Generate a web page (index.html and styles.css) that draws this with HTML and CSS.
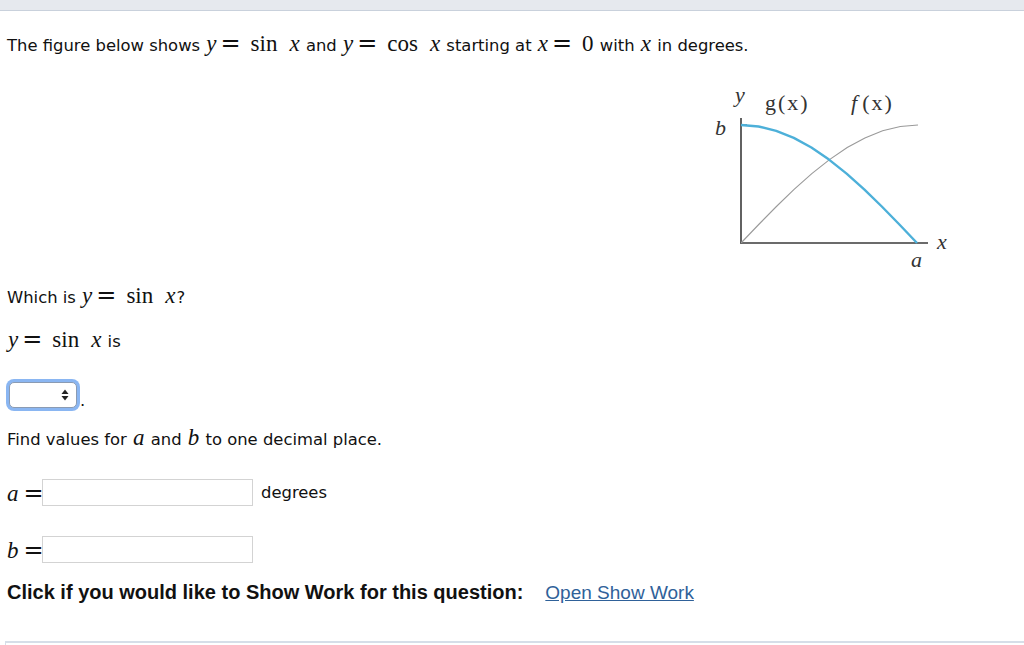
FILE: index.html
```html
<!DOCTYPE html>
<html>
<head>
<meta charset="utf-8">
<link rel="stylesheet" href="styles.css">
</head>
<body>
<div class="topbar"></div>
<div class="content">
  <p class="line intro">The figure below shows <span class="m"><i>y</i><span class="op">=</span><span class="fn">sin</span><i>x</i></span> and <span class="m"><i>y</i><span class="op">=</span><span class="fn">cos</span><i>x</i></span> starting at <span class="m"><i>x</i><span class="op">=</span>0</span> with <span class="m"><i>x</i></span> in degrees.</p>
  <div class="figure">
    <svg width="260" height="195" viewBox="0 0 260 195">
      <line x1="41" y1="38" x2="41" y2="163.5" stroke="#3a3a3a" stroke-width="1.6"/>
      <line x1="40.2" y1="163" x2="228" y2="163" stroke="#3a3a3a" stroke-width="1.6"/>
      <line x1="41" y1="45" x2="47" y2="45" stroke="#3a3a3a" stroke-width="1.2"/>
      <polyline fill="none" stroke="#9a9a9a" stroke-width="1.1" points="41,163 58.7,144.5 76.4,126.5 94.1,109.4 111.8,93.6 129.5,79.6 147.2,67.5 164.9,57.9 182.6,50.8 200.3,46.5 218,45"/>
      <polyline fill="none" stroke="#4db0d9" stroke-width="2.4" stroke-linejoin="round" points="41,45 58.6,46.5 76.2,50.8 93.8,57.9 111.4,67.5 129,79.6 146.6,93.6 164.2,109.4 181.8,126.5 199.4,144.5 217,163"/>
      <text x="35" y="22" class="fl it">y</text>
      <text x="65" y="30" class="fl sp">g(x)</text>
      <text x="151" y="30" class="fl sp"><tspan font-style="italic">f</tspan><tspan dx="3">(x)</tspan></text>
      <text x="15" y="55" class="fl it">b</text>
      <text x="237" y="169" class="fl it">x</text>
      <text x="211" y="187" class="fl it">a</text>
    </svg>
  </div>
  <p class="line which">Which is <span class="m"><i>y</i><span class="op">=</span><span class="fn">sin</span><i>x</i></span>?</p>
  <p class="line ysin"><span class="m"><i>y</i><span class="op">=</span><span class="fn">sin</span><i>x</i></span> is</p>
  <div class="selrow">
    <span class="select">
      <svg class="arrows" width="8" height="12" viewBox="0 0 8 12">
        <polygon points="4,0.5 7.5,5 0.5,5" fill="#222"/>
        <polygon points="0.5,7 7.5,7 4,11.5" fill="#222"/>
      </svg>
    </span><span class="dot">.</span>
  </div>
  <p class="line find">Find values for <span class="m"><i>a</i></span> and <span class="m"><i>b</i></span> to one decimal place.</p>
  <div class="inrow arow">
    <span class="m lbl"><i>a</i><span class="op eq">=</span></span><span class="input"></span><span class="unit">degrees</span>
  </div>
  <div class="inrow brow">
    <span class="m lbl"><i>b</i><span class="op eq">=</span></span><span class="input"></span>
  </div>
  <p class="click"><b>Click if you would like to Show Work for this question:</b><a href="#" class="link">Open Show Work</a></p>
  <div class="bottomline"></div>
</div>
</body>
</html>
```
FILE: styles.css
```css
html, body {
  margin: 0;
  padding: 0;
  background: #ffffff;
}
body {
  font-family: "DejaVu Sans", Verdana, sans-serif;
  font-size: 16.4px;
  color: #111;
}
.topbar {
  height: 10px;
  background: #e6e9ee;
  border-bottom: 1px solid #c9d1dc;
}
.content {
  padding-left: 7px;
}
.line {
  margin: 0;
  line-height: 24px;
  height: 24px;
  white-space: nowrap;
}
.m {
  font-family: "Liberation Serif", "Times New Roman", serif;
  font-size: 23px;
  line-height: 1;
  margin: 0 1px;
}
.m i {
  font-family: "Liberation Serif", "Times New Roman", "DejaVu Serif", serif;
  font-style: italic;
}
.op {
  font-family: "DejaVu Serif", serif;
  font-size: 24px;
  margin: 0 10px 0 4px;
}
.fn {
  margin-right: 12px;
}
.intro {
  margin-top: 20px;
}
.figure {
  display: flex;
  padding-left: 693px;
  margin-top: 25px;
  height: 195px;
}
.fl {
  font-family: "Liberation Serif", "Times New Roman", serif;
  font-size: 22px;
  fill: #333;
}
.sp {
  letter-spacing: 2px;
}
.it {
  font-style: italic;
}
.which {
  margin-top: 8px;
}
.ysin {
  margin-top: 20px;
}
.selrow {
  margin-top: 30px;
  height: 28px;
  display: flex;
  align-items: flex-end;
  padding-left: 2px;
}
.select {
  box-sizing: border-box;
  width: 68px;
  height: 26px;
  border: 1px solid #8a9bb3;
  border-radius: 5px;
  background: #fff;
  box-shadow: 0 0 0 3px #8ab6f2;
  display: flex;
  align-items: center;
  justify-content: flex-end;
  padding-right: 7px;
  margin-bottom: 1px;
}
.dot {
  line-height: 16px;
  margin-left: 3px;
}
.find {
  margin-top: 17px;
}
.inrow {
  display: flex;
  align-items: center;
  height: 27px;
}
.arow {
  margin-top: 29px;
}
.brow {
  margin-top: 30px;
}
.lbl {
  width: 35px;
  flex-shrink: 0;
  white-space: nowrap;
  margin: 0;
}
.eq {
  margin: 0 0 0 5px;
}
.input {
  box-sizing: border-box;
  width: 211px;
  height: 27px;
  border: 1px solid #d3d3d3;
  background: #fff;
}
.unit {
  margin-left: 8px;
}
.click {
  margin: 17px 0 0 0;
  line-height: 24px;
  font-family: "Liberation Sans", Arial, Helvetica, sans-serif;
  font-size: 19px;
  color: #111;
  white-space: nowrap;
}
.click b {
  font-size: 20px;
  font-weight: bold;
}
.link {
  margin-left: 22px;
  color: #2f6199;
  text-decoration: underline;
}
.bottomline {
  margin-top: 36px;
  margin-left: -2px;
  height: 4px;
  border-top: 2px solid #d6dee8;
  border-left: 1px solid #d6dee8;
}
```
